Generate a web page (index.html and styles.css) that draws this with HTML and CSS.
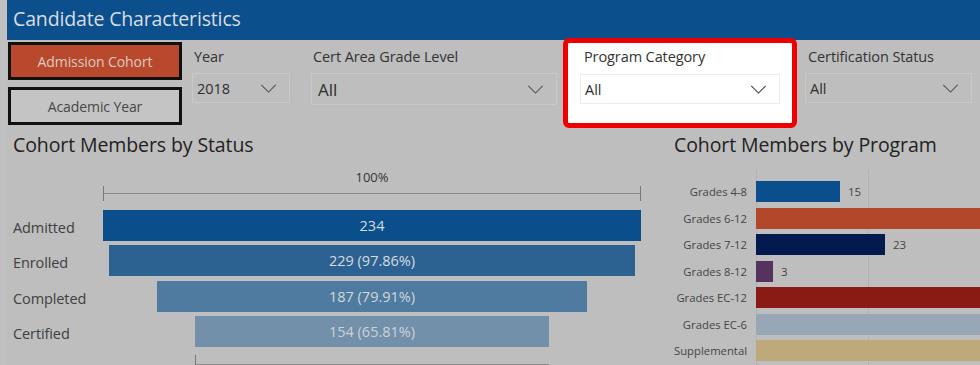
FILE: index.html
```html
<!DOCTYPE html>
<html>
<head>
<meta charset="utf-8">
<link rel="stylesheet" href="styles.css">
</head>
<body>
<div class="page">
  <div class="header">Candidate Characteristics</div>
  <div class="filters">
    <div class="buttons">
      <div class="btn btn-active">Admission Cohort</div>
      <div class="btn btn-idle">Academic Year</div>
    </div>
    <div class="slicer s-year">
      <div class="slicer-label">Year</div>
      <div class="dropdown"><span>2018</span><svg class="chev" viewBox="0 0 18 10"><path d="M1 1 L9 9 L17 1" /></svg></div>
    </div>
    <div class="slicer s-cert">
      <div class="slicer-label">Cert Area Grade Level</div>
      <div class="dropdown dd-big"><span>All</span><svg class="chev" viewBox="0 0 18 10"><path d="M1 1 L9 9 L17 1" /></svg></div>
    </div>
    <div class="slicer s-prog">
      <div class="slicer-label">Program Category</div>
      <div class="dropdown dd-white"><span>All</span><svg class="chev" viewBox="0 0 18 10"><path d="M1 1 L9 9 L17 1" /></svg></div>
    </div>
    <div class="slicer s-status">
      <div class="slicer-label">Certification Status</div>
      <div class="dropdown"><span>All</span><svg class="chev" viewBox="0 0 18 10"><path d="M1 1 L9 9 L17 1" /></svg></div>
    </div>
  </div>
  <div class="charts">
    <div class="funnel-panel">
      <div class="chart-title">Cohort Members by Status</div>
      <div class="funnel-wrap">
        <div class="funnel-labels">
          <div class="flabel">Admitted</div>
          <div class="flabel">Enrolled</div>
          <div class="flabel">Completed</div>
          <div class="flabel">Certified</div>
        </div>
        <div class="funnel">
          <div class="pct">100%</div>
          <div class="axis-top"></div>
          <div class="fbars">
            <div class="fbar f1" style="width:538px">234</div>
            <div class="fbar f2" style="width:526px">229 (97.86%)</div>
            <div class="fbar f3" style="width:430px">187 (79.91%)</div>
            <div class="fbar f4" style="width:354px">154 (65.81%)</div>
          </div>
          <div class="axis-bottom" style="width:354px"></div>
        </div>
      </div>
    </div>
    <div class="prog-panel">
      <div class="chart-title">Cohort Members by Program</div>
      <div class="prog-chart">
        <div class="plabels">
          <div class="plabel">Grades 4-8</div>
          <div class="plabel">Grades 6-12</div>
          <div class="plabel">Grades 7-12</div>
          <div class="plabel">Grades 8-12</div>
          <div class="plabel">Grades EC-12</div>
          <div class="plabel">Grades EC-6</div>
          <div class="plabel">Supplemental</div>
        </div>
        <div class="plot">
          <div class="grid g0"></div>
          <div class="grid g1"></div>
          <div class="prow"><div class="pbar c1" style="width:84px"></div><span class="pval">15</span></div>
          <div class="prow"><div class="pbar c2" style="width:260px"></div></div>
          <div class="prow"><div class="pbar c3" style="width:129px"></div><span class="pval">23</span></div>
          <div class="prow"><div class="pbar c4" style="width:17px"></div><span class="pval">3</span></div>
          <div class="prow"><div class="pbar c5" style="width:260px"></div></div>
          <div class="prow"><div class="pbar c6" style="width:260px"></div></div>
          <div class="prow"><div class="pbar c7" style="width:260px"></div></div>
        </div>
      </div>
    </div>
  </div>
</div>
</body>
</html>
```

FILE: styles.css
```css
* { box-sizing: border-box; }
html, body {
  margin: 0;
  padding: 0;
  width: 980px;
  height: 365px;
  overflow: hidden;
  background: #bebebe;
  font-family: "Open Sans", "Noto Sans", sans-serif;
}
.page {
  padding-left: 7px;
  width: 980px;
  height: 365px;
  background: #c1c1c1;
}
.header {
  height: 40px;
  background: #0b4f8c;
  color: #d9dde3;
  font-size: 19.5px;
  line-height: 38px;
  padding-left: 6px;
  letter-spacing: -0.15px;
}
.filters {
  display: flex;
  align-items: flex-start;
  height: 90px;
  background: #bebebe;
}
.buttons {
  margin-left: 1px;
  margin-top: 2px;
  width: 174px;
  display: flex;
  flex-direction: column;
  gap: 7px;
}
.btn {
  height: 38px;
  border: 3px solid #111;
  font-size: 14px;
  display: flex;
  align-items: center;
  justify-content: center;
  letter-spacing: -0.1px;
}
.btn-active { background: #b8492c; color: #dcc9c2; }
.btn-idle { background: #c4c4c4; color: #474747; }
.slicer-label {
  font-size: 14.5px;
  color: #333;
  height: 33px;
  line-height: 34px;
  letter-spacing: -0.1px;
}
.dropdown {
  height: 30px;
  border: 1px solid #c9c9c9;
  display: flex;
  align-items: center;
  justify-content: space-between;
  padding: 0 12px 0 4px;
  font-size: 14.5px;
  color: #2f2f2f;
}
.dd-big { height: 32px; font-size: 17px; padding-left: 6px; }
.chev { width: 17px; height: 9px; }
.chev path { fill: none; stroke: #555; stroke-width: 1.2; }
.s-year { margin-left: 10px; width: 98px; padding-top: 0; }
.s-year .slicer-label { padding-left: 2px; }
.s-cert { margin-left: 21px; width: 246px; }
.s-cert .slicer-label { padding-left: 2px; }
.s-prog {
  margin-left: 6px;
  margin-top: -2px;
  width: 234px;
  height: 90px;
  background: #fff;
  border: 5px solid #ee0000;
  border-radius: 6px;
  padding: 0 12px;
}
.s-prog .slicer-label { padding-left: 4px; color: #333; height: 31px; line-height: 28px; }
.dd-white { border-color: #ececec; background: #fff; }
.dd-white .chev path { stroke: #444; }
.s-status { margin-left: 8px; width: 167px; }
.s-status .slicer-label { padding-left: 3px; }
.charts {
  display: flex;
  background: #bebebe;
  height: 235px;
}
.chart-title {
  font-size: 19.5px;
  color: #222;
  height: 32px;
  line-height: 30px;
  letter-spacing: -0.1px;
}
.funnel-panel { width: 662px; padding-left: 6px; }
.funnel-panel .chart-title { height: 34px; }
.funnel-wrap { display: flex; }
.funnel-labels {
  width: 90px;
  padding-top: 48px;
  display: flex;
  flex-direction: column;
  gap: 4.3px;
}
.flabel {
  height: 31px;
  line-height: 31px;
  font-size: 14.5px;
  color: #404040;
  letter-spacing: -0.1px;
}
.funnel { width: 538px; display: flex; flex-direction: column; align-items: center; }
.pct { font-size: 13px; color: #333; height: 22px; line-height: 26px; }
.axis-top {
  width: 538px;
  height: 15px;
  border-left: 1px solid #777;
  border-right: 1px solid #777;
  background: linear-gradient(#8a8a8a, #8a8a8a) 0 7px / 100% 1px no-repeat;
  margin-bottom: 9px;
}
.fbars { display: flex; flex-direction: column; align-items: center; gap: 4.3px; }
.fbar {
  height: 31px;
  line-height: 31px;
  text-align: center;
  font-size: 14.5px;
  color: #d6dbe0;
}
.f1 { background: #0a4f8b; }
.f2 { background: #2c6292; }
.f3 { background: #4e7b9f; color: #d2d7dc; }
.f4 { background: #7290aa; color: #ccd2d8; }
.axis-bottom {
  margin-top: 8px;
  height: 10px;
  border-left: 1px solid #777;
  border-bottom: 1px solid #8a8a8a;
}
.prog-panel { width: 318px; padding-left: 12px; }
.prog-chart { display: flex; }
.plabels {
  width: 78px;
  padding-top: 19px;
  display: flex;
  flex-direction: column;
  gap: 5.5px;
}
.plabel {
  height: 21px;
  line-height: 21px;
  text-align: right;
  font-size: 11.3px;
  color: #454545;
}
.plot {
  position: relative;
  margin-left: 9px;
  flex: 1;
  padding-top: 19px;
  display: flex;
  flex-direction: column;
  gap: 5.5px;
  height: 203px;
}
.grid {
  position: absolute;
  top: 8px;
  bottom: 0;
  border-left: 1px dotted #a5a5a5;
}
.g0 { left: 0; }
.g1 { left: 112px; }
.prow { display: flex; align-items: center; height: 21px; position: relative; }
.pbar { height: 21px; flex: none; }
.pval { font-size: 11.5px; color: #444; margin-left: 8px; }
.c1 { background: #0a4f8b; }
.c2 { background: #b3472a; }
.c3 { background: #021a4e; }
.c4 { background: #56335f; }
.c5 { background: #891a14; }
.c6 { background: #97a7b6; }
.c7 { background: #bea97b; }
```
